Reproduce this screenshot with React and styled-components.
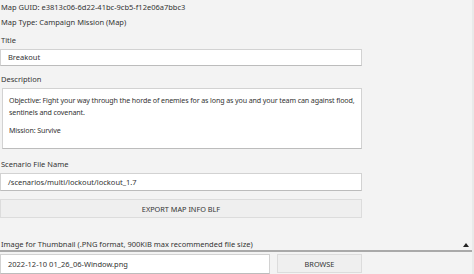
import React from 'react';
import styled, { createGlobalStyle } from 'styled-components';

const Global = createGlobalStyle`
  html, body {
    margin: 0;
    padding: 0;
    background: #f3f3f3;
  }
  body {
    font-family: 'Noto Sans', 'Open Sans', sans-serif;
    font-size: 7.5px;
    color: #333;
  }
`;

const Window = styled.div`
  width: 474px;
  height: 274px;
  display: flex;
  overflow: hidden;
  background: #f3f3f3;
`;

const Content = styled.div`
  flex: 1;
  display: flex;
  flex-direction: column;
`;

const Form = styled.div`
  width: 362px;
  display: flex;
  flex-direction: column;
`;

const Info = styled.div`
  height: 15px;
  line-height: 15px;
  padding-left: 1px;
`;

const Label = styled.div`
  line-height: 12px;
  padding-left: 1px;
  margin-top: ${(p) => p.top || 0}px;
  margin-bottom: ${(p) => (p.bottom === undefined ? 3 : p.bottom)}px;
`;

const Field = styled.div`
  background: #fff;
  border: 1px solid #d2d2d2;
  border-bottom-color: #bcbcbc;
  height: ${(p) => p.h || 17}px;
  box-sizing: border-box;
  padding: ${(p) => (p.multi ? '5px 2px 5px 6px' : '0 7px')};
  line-height: ${(p) => (p.multi ? '12px' : `${(p.h || 17) - 2}px`)};
  margin-left: ${(p) => p.left || 0}px;
  width: ${(p) => p.w || 'auto'};
  white-space: nowrap;
  overflow: hidden;
`;

const Para = styled.p`
  margin: ${(p) => p.top || 0}px 0 0;
  font-size: 7.1px;
  letter-spacing: -0.12px;
`;

const Button = styled.div`
  height: 19px;
  box-sizing: border-box;
  border: 1px solid #dcdcdc;
  background: #efefef;
  display: flex;
  align-items: center;
  justify-content: center;
  font-size: 7.3px;
  margin-top: ${(p) => p.top || 0}px;
  width: ${(p) => p.w || 'auto'};
`;

const Splitter = styled.div`
  margin-top: 20px;
  position: relative;
  width: 472px;
`;

const SplitLine = styled.div`
  height: 2px;
  background: #a9a9a9;
`;

const Arrow = styled.span`
  position: absolute;
  right: 3px;
  top: 5px;
  width: 0;
  height: 0;
  border-left: 3px solid transparent;
  border-right: 3px solid transparent;
  border-bottom: 4px solid #222;
`;

const Row = styled.div`
  display: flex;
  gap: 7px;
  margin-top: 2px;
  width: 362px;
`;

const Edge = styled.div`
  width: 2px;
  background: #e9e9e9;
`;

export default function App() {
  return (
    <>
      <Global />
      <Window>
        <Content>
          <Form>
            <Info>Map GUID: e3813c06-6d22-41bc-9cb5-f12e06a7bbc3</Info>
            <Info>Map Type: Campaign Mission (Map)</Info>
            <Label top={4}>Title</Label>
            <Field h={17}>Breakout</Field>
            <Label top={7}>Description</Label>
            <Field h={61} left={2} multi>
              <Para>
                Objective: Fight your way through the horde of enemies for as long as you and your team can against flood,
                <br />
                sentinels and covenant.
              </Para>
              <Para top={6}>Mission: Survive</Para>
            </Field>
            <Label top={9}>Scenario File Name</Label>
            <Field h={18}>/scenarios/multi/lockout/lockout_1.7</Field>
            <Button top={8}>EXPORT MAP INFO BLF</Button>
          </Form>
          <Splitter>
            <Label bottom={0}>Image for Thumbnail (.PNG format, 900KiB max recommended file size)</Label>
            <Arrow />
            <SplitLine />
          </Splitter>
          <Row>
            <Field h={20} w="270px">2022-12-10 01_26_06-Window.png</Field>
            <Button w="85px">BROWSE</Button>
          </Row>
        </Content>
        <Edge />
      </Window>
    </>
  );
}
